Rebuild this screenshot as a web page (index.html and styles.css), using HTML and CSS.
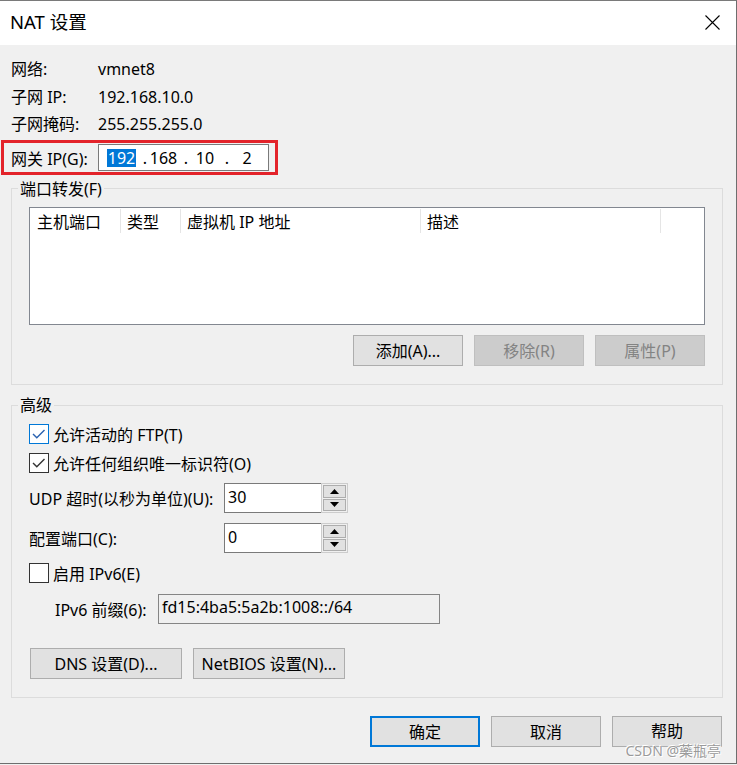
FILE: index.html
```html
<!DOCTYPE html>
<html lang="zh-CN">
<head>
<meta charset="utf-8">
<title>NAT 设置</title>
<link rel="stylesheet" href="styles.css">
</head>
<body>
<div class="window">
  <div class="titlebar">
    <div class="title">NAT 设置</div>
    <div class="close">
      <svg width="15" height="15" viewBox="0 0 15 15"><path d="M0.5 0.5L14.5 14.5M14.5 0.5L0.5 14.5" stroke="#000" stroke-width="1.1" fill="none"/></svg>
    </div>
  </div>
  <div class="content">
    <div class="info">
      <div class="info-row"><span class="info-label">网络:</span><span>vmnet8</span></div>
      <div class="info-row"><span class="info-label">子网 IP:</span><span>192.168.10.0</span></div>
      <div class="info-row"><span class="info-label">子网掩码:</span><span>255.255.255.0</span></div>
    </div>
    <div class="gateway">
      <span class="gw-label">网关 IP(G):</span>
      <div class="ipbox">
        <span class="ipc w45"><span class="sel">192</span></span>
        <span class="ipc w2">.</span>
        <span class="ipc w35">168</span>
        <span class="ipc w10">.</span>
        <span class="ipc w28">10</span>
        <span class="ipc w16">.</span>
        <span class="ipc w24">2</span>
      </div>
    </div>

    <fieldset class="group ports">
      <legend>端口转发(F)</legend>
      <div class="listview">
        <div class="lv-head">
          <div class="col c1">主机端口</div>
          <div class="col c2">类型</div>
          <div class="col c3">虚拟机 IP 地址</div>
          <div class="col c4">描述</div>
        </div>
      </div>
      <div class="btn-row">
        <button class="btn">添加(A)...</button>
        <button class="btn disabled">移除(R)</button>
        <button class="btn disabled">属性(P)</button>
      </div>
    </fieldset>

    <fieldset class="group advanced">
      <legend>高级</legend>
      <div class="cb-row">
        <span class="cb cb-focus"><svg width="18" height="18" viewBox="0 0 18 18"><polyline points="3,9 6.8,12.8 14.5,5" fill="none" stroke="#2a62b0" stroke-width="1.4"/></svg></span>
        <span>允许活动的 FTP(T)</span>
      </div>
      <div class="cb-row">
        <span class="cb"><svg width="18" height="18" viewBox="0 0 18 18"><polyline points="3,9 6.8,12.8 14.5,5" fill="none" stroke="#333" stroke-width="1.4"/></svg></span>
        <span>允许任何组织唯一标识符(O)</span>
      </div>
      <div class="field-row first">
        <span class="field-label">UDP 超时(以秒为单位)(U):</span>
        <div class="spin">
          <div class="spin-input">30</div>
          <div class="spin-btns">
            <div class="spin-btn"><svg width="9" height="5" viewBox="0 0 9 5"><polygon points="4.5,0 9,5 0,5" fill="#000"/></svg></div>
            <div class="spin-btn"><svg width="9" height="5" viewBox="0 0 9 5"><polygon points="0,0 9,0 4.5,5" fill="#000"/></svg></div>
          </div>
        </div>
      </div>
      <div class="field-row">
        <span class="field-label">配置端口(C):</span>
        <div class="spin">
          <div class="spin-input">0</div>
          <div class="spin-btns">
            <div class="spin-btn"><svg width="9" height="5" viewBox="0 0 9 5"><polygon points="4.5,0 9,5 0,5" fill="#000"/></svg></div>
            <div class="spin-btn"><svg width="9" height="5" viewBox="0 0 9 5"><polygon points="0,0 9,0 4.5,5" fill="#000"/></svg></div>
          </div>
        </div>
      </div>
      <div class="cb-row cb-ipv6">
        <span class="cb"></span>
        <span>启用 IPv6(E)</span>
      </div>
      <div class="prefix-row">
        <span class="prefix-label">IPv6 前缀(6):</span>
        <div class="prefix-input">fd15:4ba5:5a2b:1008::/64</div>
      </div>
      <div class="dns-row">
        <button class="btn wide">DNS 设置(D)...</button>
        <button class="btn wide">NetBIOS 设置(N)...</button>
      </div>
    </fieldset>

    <div class="footer">
      <button class="btn default">确定</button>
      <button class="btn">取消</button>
      <button class="btn help">帮助</button>
    </div>
  </div>
  <div class="watermark">CSDN @藥瓶亭</div>
</div>
</body>
</html>
```

FILE: styles.css
```css
* { box-sizing: border-box; }
html, body { margin: 0; padding: 0; }
body {
  width: 737px;
  height: 765px;
  background: #f0f0f0;
  font-family: "Noto Sans", "Noto Sans CJK SC", sans-serif;
  font-size: 16px;
  color: #000;
  overflow: hidden;
}
.window {
  position: relative;
  width: 737px;
  height: 764px;
  border-top: 1px solid #7a7a7a;
  border-right: 1px solid #6e6e6e;
  border-bottom: 1px solid #6e6e6e;
  background: #f0f0f0;
  display: flex;
  flex-direction: column;
}
.titlebar {
  height: 44px;
  flex: none;
  background: #fff;
  display: flex;
  align-items: center;
  justify-content: space-between;
  padding-left: 10px;
}
.title {
  font-size: 18.5px;
  line-height: 24px;
  padding-bottom: 3px;
}
.close {
  width: 48px;
  height: 44px;
  display: flex;
  align-items: center;
  justify-content: center;
  padding-bottom: 2px;
}
.content {
  flex: 1;
  padding-top: 11px;
}
.info { padding-left: 11px; }
.info-row {
  display: flex;
  height: 27.5px;
  line-height: 27.5px;
}
.info-label { width: 87px; flex: none; }

.gateway {
  width: 277px;
  height: 35px;
  margin: 1.5px 0 0 1px;
  border: 3px solid #e3232a;
  display: flex;
  align-items: center;
  padding-left: 7px;
}
.gw-label { width: 87px; flex: none; }
.ipbox {
  width: 171px;
  height: 27px;
  flex: none;
  border: 1px solid #7a7a7a;
  background: #fff;
  display: flex;
  align-items: center;
}
.ipc {
  display: flex;
  justify-content: center;
  flex: none;
  line-height: 18px;
}
.w45 { width: 45px; }
.w2 { width: 2px; }
.w35 { width: 35px; }
.w10 { width: 10px; }
.w28 { width: 28px; }
.w16 { width: 16px; }
.w24 { width: 24px; }
.sel {
  background: #0078d7;
  color: #fff;
  padding: 0 1px;
  line-height: 18px;
}

.group {
  width: 712px;
  margin: 0 0 0 11px;
  border: 1px solid #dcdcdc;
  padding: 0 17px;
  min-width: 0;
}
.group legend {
  padding: 0 2px;
  margin-left: -11px;
  line-height: 22px;
  font-size: 16px;
}
.ports {
  margin-top: 2.5px;
  padding-top: 7.5px;
  padding-bottom: 18px;
}
.listview {
  height: 118px;
  border: 1px solid #828790;
  background: #fff;
}
.lv-head { display: flex; height: 26px; }
.col {
  flex: none;
  height: 24px;
  margin-top: 1px;
  line-height: 26px;
  border-right: 1px solid #e5e5e5;
  padding-left: 6px;
  white-space: nowrap;
}
.c1 { width: 91px; padding-left: 7px; }
.c2 { width: 60px; }
.c3 { width: 240px; }
.c4 { width: 240px; }

.btn-row {
  display: flex;
  justify-content: flex-end;
  gap: 11px;
  margin-top: 10px;
}
.btn {
  width: 110px;
  height: 31px;
  flex: none;
  border: 1px solid #adadad;
  background: #e1e1e1;
  display: flex;
  align-items: center;
  justify-content: center;
  font: inherit;
  line-height: 16px;
  color: #000;
  padding: 0;
  margin: 0;
  border-radius: 0;
}
.btn.help { padding-bottom: 1px; }
.btn.disabled {
  background: #cccccc;
  border-color: #bfbfbf;
  color: #838383;
}
.btn.default {
  border: 2px solid #0078d7;
}
.btn.wide { width: 152px; }

.advanced {
  margin-top: 9px;
  padding-top: 3px;
  padding-bottom: 18px;
}
.cb-row {
  display: flex;
  align-items: center;
  height: 29px;
  gap: 4px;
}
.cb {
  width: 20px;
  height: 20px;
  flex: none;
  border: 1px solid #333;
  background: #fff;
  display: flex;
}
.cb-focus { border-color: #0078d7; }
.cb-ipv6 { margin-top: 5px; }

.field-row {
  display: flex;
  align-items: center;
  height: 30px;
  margin-top: 10px;
}
.field-row.first { margin-top: 6px; }
.field-label { width: 195px; flex: none; }
.spin {
  display: flex;
  width: 124px;
  height: 30px;
}
.spin-input {
  width: 97px;
  border: 1px solid #7a7a7a;
  border-right: none;
  background: #fff;
  padding-left: 3px;
  line-height: 26px;
}
.spin-btns {
  width: 27px;
  border: 1px solid #cccccc;
  padding: 1px;
  display: flex;
  flex-direction: column;
  gap: 1px;
}
.spin-btn {
  flex: 1;
  border: 1px solid #adadad;
  background: #e1e1e1;
  display: flex;
  align-items: center;
  justify-content: center;
}

.prefix-row {
  display: flex;
  align-items: center;
  height: 30px;
  margin-top: 7px;
  padding-left: 26px;
}
.prefix-label { width: 103px; flex: none; }
.prefix-input {
  width: 282px;
  height: 30px;
  border: 1px solid #858585;
  background: #f0f0f0;
  padding-left: 3px;
  line-height: 24px;
}
.dns-row {
  display: flex;
  gap: 11px;
  margin-top: 24px;
  padding-left: 1px;
}
.footer {
  display: flex;
  justify-content: flex-end;
  gap: 11px;
  margin-top: 18px;
  padding-right: 14px;
}
.watermark {
  position: absolute;
  right: 15px;
  top: 743px;
  font-size: 14px;
  line-height: 13px;
  color: #9a9a9a;
  text-shadow: 0 0 1px #fff, 1px 1px 0 #fff, -1px -1px 0 #fff;
}
```
